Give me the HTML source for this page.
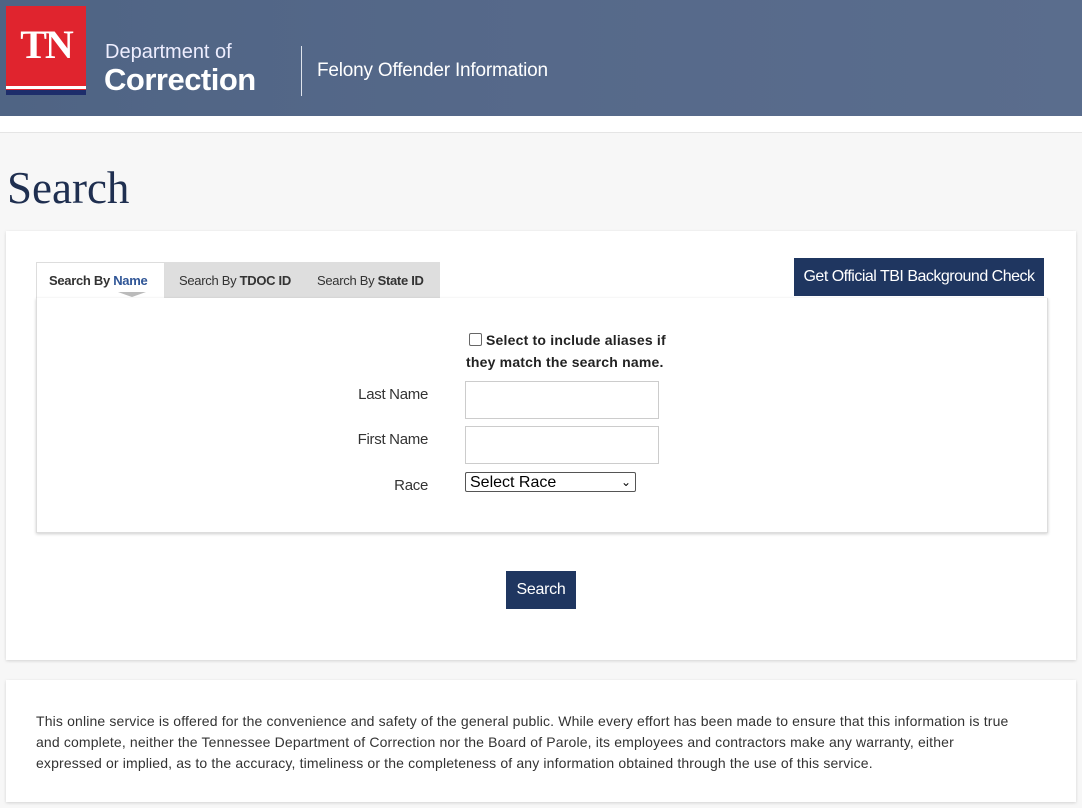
<!DOCTYPE html>
<html><head><style>
body{margin:0;background:#f7f7f7;font-family:"Liberation Sans",sans-serif;width:1082px;height:808px;overflow:hidden;position:relative}
.hdr{position:absolute;left:0;top:0;width:1082px;height:116px;background:linear-gradient(90deg,#4f6484,#56698a 50%,#5a6d8d)}
.logo{position:absolute;left:6px;top:6px;width:80px;height:89px;background:#e0242e}
.logo .t{position:absolute;left:0;top:15px;width:80px;text-align:center;color:#fff;font-family:"Liberation Serif",serif;font-weight:bold;font-size:40px;letter-spacing:-2px}
.logo .w{position:absolute;left:0;top:80px;width:80px;height:3px;background:#fff}
.logo .b{position:absolute;left:0;top:84px;width:80px;height:5px;background:#1d2d6b}
.ht{position:absolute;color:#fff}
.line{position:absolute;left:301px;top:46px;width:1px;height:50px;background:#dfe4ec}
.panel{position:absolute;background:#fff;box-shadow:0 1px 3px rgba(0,0,0,.15)}
.tabs{position:absolute;left:36px;top:262px;height:36px;width:404px;background:#dedede;font-size:13px;letter-spacing:-.3px}
.tab{position:absolute;top:0;height:36px;line-height:38px;color:#333}
.form{position:absolute;left:36px;top:298px;width:1010px;height:234px;background:#fff;border:1px solid #ddd;box-shadow:0 1px 3px rgba(0,0,0,.2);border-top:none}
.lbl{position:absolute;font-size:15px;color:#333;text-align:right;width:120px;letter-spacing:-.3px}
.inp{position:absolute;left:465px;width:192px;height:36px;border:1px solid #ccc;background:#fff}
.btn{position:absolute;background:#1f3660;color:#fff;font-size:16px;text-align:center}
</style></head><body>
<div class="hdr"></div>
<div class="logo"><div class="t">TN</div><div class="w"></div><div class="b"></div></div>
<div class="ht" style="left:105px;top:41px;font-size:20px;color:#eef">Department of</div>
<div class="ht" style="left:104px;top:62px;font-size:31px;font-weight:bold;letter-spacing:-.5px">Correction</div>
<div class="line"></div>
<div class="ht" style="left:317px;top:60px;font-size:19px;letter-spacing:-.2px">Felony Offender Information</div>
<div style="position:absolute;left:0;top:116px;width:1082px;height:16px;background:#fff;border-bottom:1px solid #e5e5e5"></div>
<div style="position:absolute;left:7px;top:162px;font-family:'Liberation Serif',serif;font-size:45px;color:#1f2f50">Search</div>
<div class="panel" style="left:6px;top:231px;width:1070px;height:429px"></div>
<div class="tabs">
<div style="position:absolute;left:0;top:0;width:129px;height:37px;background:#fff;border:1px solid #ddd;border-bottom:none;box-sizing:border-box"></div>
<div class="tab" style="left:13px;font-weight:bold">Search By <span style="color:#2f5596">Name</span></div>
<div style="position:absolute;left:82px;top:30px;width:0;height:0;border-left:14px solid transparent;border-right:14px solid transparent;border-top:5px solid #bbb"></div>
<div class="tab" style="left:143px">Search By <b>TDOC ID</b></div>
<div class="tab" style="left:281px">Search By <b>State ID</b></div>
</div>
<div class="btn" style="left:794px;top:258px;width:250px;height:38px;line-height:38px;letter-spacing:-.5px;font-size:16px">Get Official TBI Background Check</div>
<div class="form"></div>
<div style="position:absolute;left:466px;top:329px;font-size:14px;font-weight:bold;color:#222;line-height:22px;width:220px;letter-spacing:.2px"><span style="display:inline-block;width:11px;height:11px;border:1px solid #666;border-radius:2px;vertical-align:-1px;margin-right:4px;margin-left:3px"></span>Select to include aliases if<br>they match the search name.</div>
<div class="lbl" style="left:308px;top:386px">Last Name</div>
<div class="inp" style="top:381px"></div>
<div class="lbl" style="left:308px;top:431px">First Name</div>
<div class="inp" style="top:426px"></div>
<div class="lbl" style="left:308px;top:477px">Race</div>
<div style="position:absolute;left:465px;top:472px;height:20px;border:1px solid #555;border-radius:2px;background:#fff;font-size:16px;line-height:19px;padding-left:4px;box-sizing:border-box;width:171px">Select Race<span style="position:absolute;right:4px;top:0;font-size:12px">&#8964;</span></div>
<div class="btn" style="left:506px;top:571px;width:70px;height:38px;line-height:38px;letter-spacing:-.3px">Search</div>
<div class="panel" style="left:6px;top:680px;width:1070px;height:122px"></div>
<div style="position:absolute;left:36px;top:711px;width:1040px;font-size:14px;line-height:21px;color:#333;white-space:nowrap;letter-spacing:.15px">This online service is offered for the convenience and safety of the general public. While every effort has been made to ensure that this information is true<br>and complete, neither the Tennessee Department of Correction nor the Board of Parole, its employees and contractors make any warranty, either<br>expressed or implied, as to the accuracy, timeliness or the completeness of any information obtained through the use of this service.</div>
</body></html>
